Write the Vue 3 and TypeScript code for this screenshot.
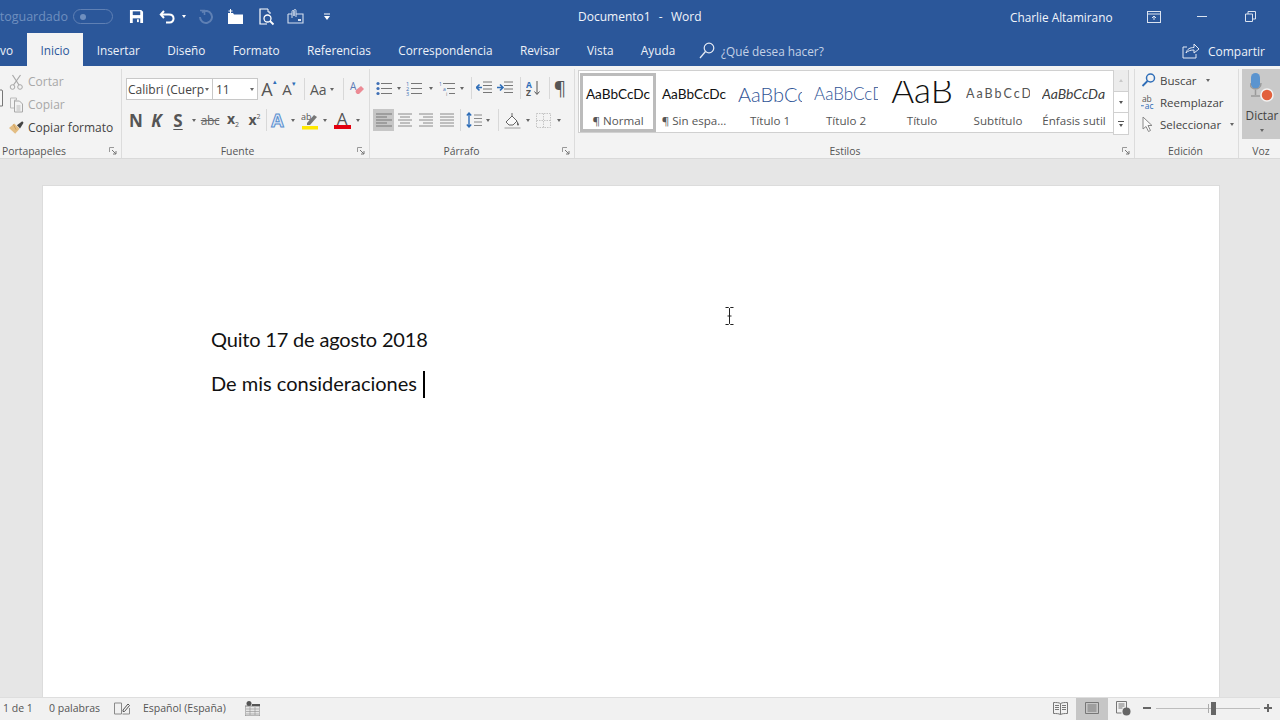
<script setup lang="ts">
const tabs: string[] = ['Insertar', 'Diseño', 'Formato', 'Referencias', 'Correspondencia', 'Revisar', 'Vista', 'Ayuda']
const styles = [
  { cls: 'normal sel', preview: 'AaBbCcDc', label: '¶ Normal' },
  { cls: 'normal', preview: 'AaBbCcDc', label: '¶ Sin espa...' },
  { cls: 'h1', preview: 'AaBbCc', label: 'Título 1' },
  { cls: 'h2', preview: 'AaBbCcD', label: 'Título 2' },
  { cls: 'title', preview: 'AaB', label: 'Título' },
  { cls: 'sub', preview: 'AaBbCcD', label: 'Subtítulo' },
  { cls: 'emph', preview: 'AaBbCcDa', label: 'Énfasis sutil' },
]
</script>

<template>
  <div class="word">
    <header class="top">
      <div class="titlebar">
        <div class="autosave"><span>Autoguardado</span></div>
        <div class="toggle"><i></i></div>
        <div class="qat">
          <svg width="15" height="15" viewBox="0 0 16 16"><path d="M1 1h12l2 2v12H1z" fill="#fff"/><path d="M4 2.500h8v4H4z" fill="#2b579a"/><path d="M4 10h8v5H4z" fill="#2b579a"/><path d="M8.500 11h2v3h-2z" fill="#fff"/></svg>
          <svg class="undo" width="17" height="16" viewBox="0 0 17 16"><path d="M5 2 1.800 5.500 5 9" fill="none" stroke="#fff" stroke-width="2"/><path d="M2 5.500h8c6 0 6 8 .5 8H7" fill="none" stroke="#fff" stroke-width="2"/></svg>
          <i class="dd white undo-dd"></i>
          <svg class="redo" width="16" height="16" viewBox="0 0 16 16"><path d="M4 3.500A6 6 0 1 1 2 8" fill="none" stroke="#5f80b4" stroke-width="2"/><path d="M2 1.500h4.500V6" fill="none" stroke="#5f80b4" stroke-width="1.600"/></svg>
          <svg class="folder" width="17" height="16" viewBox="0 0 17 16"><path d="M1 4h5l1 1.500h9V15H1z" fill="#fff"/><path d="M3.500 0v4M1.500 2h4" stroke="#fff" stroke-width="1"/></svg>
          <svg class="preview" width="17" height="18" viewBox="0 0 17 18"><path d="M10 1H2v15h7" fill="none" stroke="#fff" stroke-width="1.200"/><path d="M10 1v3h2v2" fill="none" stroke="#fff"/><circle cx="9.500" cy="10.500" r="3.500" fill="none" stroke="#fff" stroke-width="1.300"/><path d="m12 13 3.500 3.500" stroke="#fff" stroke-width="1.800"/></svg>
          <svg class="touch" width="17" height="16" viewBox="0 0 17 16"><path d="M1 5h4M9 5h7v9H1V5" fill="none" stroke="#d6e0ef" stroke-width="1.100"/><path d="M5 9V2.500a1 1 0 0 1 2 0V7M7 7V1.500a1 1 0 0 1 2 0V8" fill="none" stroke="#d6e0ef"/><path d="M11 10h3v2h-3z" fill="#d6e0ef"/></svg>
          <svg class="more" width="8" height="8" viewBox="0 0 8 8"><path d="M1 1h6" stroke="#fff"/><path d="M1 3h6L4 7z" fill="#fff"/></svg>
        </div>
        <div class="doc-title">Documento1&nbsp; -&nbsp; Word</div>
        <div class="user">Charlie Altamirano</div>
        <svg class="win-ribbon" width="14" height="12" viewBox="0 0 14 12"><rect x=".5" y=".5" width="13" height="11" fill="none" stroke="#dbe3f0"/><path d="M.5 3h13" stroke="#dbe3f0"/><path d="M7 9V5M5 7l2-2 2 2" fill="none" stroke="#dbe3f0"/></svg>
        <span class="win-min"></span>
        <svg class="win-restore" width="11" height="11" viewBox="0 0 11 11"><path d="M.5 3h7v7.500h-7zM3 3V.5h7.500V8H8" fill="none" stroke="#dbe3f0"/></svg>
      </div>
      <div class="tabbar">
        <span class="tab-file">vo</span>
        <span class="tab-active">Inicio</span>
        <span v-for="t in tabs" :key="t" class="tab">{{ t }}</span>
        <svg class="search" width="16" height="17" viewBox="0 0 16 17"><circle cx="10" cy="6" r="4.800" fill="none" stroke="#e4eaf4" stroke-width="1.200"/><path d="M6.500 9.500 1 16" stroke="#e4eaf4" stroke-width="1.300"/></svg>
        <span class="tell">¿Qué desea hacer?</span>
        <svg class="share" width="18" height="17" viewBox="0 0 18 17"><path d="M5 5H1v11h13v-4" fill="none" stroke="#e4eaf4"/><path d="M4 11c1-4 4-5.500 8-5.500V2l5 5-5 4V8c-3 0-6 .5-8 3z" fill="none" stroke="#e4eaf4"/></svg>
        <span class="share-text">Compartir</span>
      </div>
    </header>

    <section class="ribbon">
      <div class="group g-clip">
        <div class="clip-body">
          <svg class="paste" width="3" height="18" viewBox="0 0 3 18"><path d="M0 1h2l.5 1v15H0" fill="#f7f7f7" stroke="#777"/></svg>
          <div class="clip-rows">
            <div class="clip-row off">
              <svg width="14" height="16" viewBox="0 0 14 16"><circle cx="3" cy="13" r="2.300" fill="none" stroke="#a8a8a8"/><circle cx="10.500" cy="13" r="2.300" fill="none" stroke="#a8a8a8"/><path d="M4 11 11 1M9.500 11 3 1" stroke="#a8a8a8" stroke-width="1.200"/></svg>
              <span>Cortar</span>
            </div>
            <div class="clip-row off">
              <svg width="14" height="16" viewBox="0 0 14 16"><path d="M1 1h6v2H5v8H1z" fill="none" stroke="#bbb"/><path d="M5 4h5l3 3v8H5z" fill="none" stroke="#a8a8a8"/><path d="M7 9h4M7 11h4M7 13h4" stroke="#bbb"/></svg>
              <span>Copiar</span>
            </div>
            <div class="clip-row">
              <svg class="brush" width="17" height="15" viewBox="0 0 17 15"><path d="M0 8 6 3l6 6-5 5.500z" fill="#e3bd83"/><path d="M5 4l3 6" stroke="#c99a57"/><path d="m9 5 6-4.500 1.500 1.500-4 6.500z" fill="#444"/></svg>
              <span>Copiar formato</span>
            </div>
          </div>
        </div>
        <div class="glabel clip-label"><span>Portapapeles</span><svg class="launch" width="8" height="8" viewBox="0 0 8 8"><path d="M.5 5V.5H5" fill="none" stroke="#999"/><path d="M3 3l4 4M7 4v3H4" fill="none" stroke="#777"/></svg></div>
      </div>

      <div class="group g-font">
        <div class="font-row1">
          <div class="combo font-name"><span>Calibri (Cuerp</span><i class="dd"></i></div>
          <div class="combo font-size"><span>11</span><i class="dd"></i></div>
          <span class="grow big">A<sup>▴</sup></span>
          <span class="grow small">A<sup>▾</sup></span>
          <i class="vsep"></i>
          <span class="aa">Aa<i class="dd"></i></span>
          <i class="vsep"></i>
          <svg width="16" height="16" viewBox="0 0 16 16"><text x="1" y="9" font-size="10" fill="#5b7bb5" font-family="Open Sans">A</text><path d="m7 9 5-4 3 3-5 5H8L6.500 11z" fill="#ec8a94"/></svg>
        </div>
        <div class="font-row2">
          <b class="fmt">N</b>
          <b class="fmt it">K</b>
          <b class="fmt un">S</b>
          <i class="dd"></i>
          <span class="strike">abc</span>
          <span class="sc">x<sub>2</sub></span>
          <span class="sc">x<sup>2</sup></span>
          <i class="vsep"></i>
          <span class="fx">A</span>
          <i class="dd"></i>
          <svg width="18" height="19" viewBox="0 0 18 19"><text x="0" y="9" font-size="9" fill="#555" font-family="Open Sans">ab</text><path d="m6 12 7-8 3 2-7 8H6z" fill="#777"/><rect x="1" y="15" width="16" height="3.500" fill="#ffe800"/></svg>
          <i class="dd"></i>
          <span class="fcolor">A</span>
          <i class="dd"></i>
        </div>
        <div class="glabel"><span>Fuente</span><svg class="launch" width="8" height="8" viewBox="0 0 8 8"><path d="M.5 5V.5H5" fill="none" stroke="#999"/><path d="M3 3l4 4M7 4v3H4" fill="none" stroke="#777"/></svg></div>
      </div>

      <div class="group g-para">
        <div class="para-row1">
          <svg width="16" height="15" viewBox="0 0 16 15"><g fill="#3f6fb5"><circle cx="2" cy="2.500" r="1.600"/><circle cx="2" cy="7.500" r="1.600"/><circle cx="2" cy="12.500" r="1.600"/></g><path d="M5 2.500h11M5 7.500h11M5 12.500h11" stroke="#777"/></svg>
          <i class="dd"></i>
          <svg width="16" height="15" viewBox="0 0 16 15"><g fill="#3f6fb5" font-size="5.500" font-family="Open Sans"><text x="0" y="5">1</text><text x="0" y="10">2</text><text x="0" y="15">3</text></g><path d="M5 2.500h11M5 7.500h11M5 12.500h11" stroke="#777"/></svg>
          <i class="dd"></i>
          <svg width="16" height="15" viewBox="0 0 16 15"><g fill="#3f6fb5" font-size="5" font-family="Open Sans"><text x="0" y="5">1</text><text x="4" y="10">a</text></g><text x="7" y="15" font-size="5" fill="#777">i</text><path d="M4 2.500h12M8 7.500h8M10 12.500h6" stroke="#777"/></svg>
          <i class="dd"></i>
          <i class="vsep"></i>
          <svg width="16" height="14" viewBox="0 0 16 14"><path d="M7 1h9M7 4.500h9M7 8h9M7 11.500h9" stroke="#777"/><path d="M6 6.500H1M3.500 3.500l-3 3 3 3" fill="none" stroke="#2f6eb8" stroke-width="1.600"/></svg>
          <svg width="16" height="14" viewBox="0 0 16 14"><path d="M7 1h9M7 4.500h9M7 8h9M7 11.500h9" stroke="#777"/><path d="M0 6.500h5M3 3.500l3 3-3 3" fill="none" stroke="#2f6eb8" stroke-width="1.600"/></svg>
          <i class="vsep"></i>
          <svg width="15" height="16" viewBox="0 0 15 16"><text x="0" y="7.500" font-size="8.500" font-weight="700" fill="#2f6eb8" font-family="Open Sans">A</text><text x="0" y="15.500" font-size="8.500" font-weight="700" fill="#555" font-family="Open Sans">Z</text><path d="M11 1v13M8.500 11.500l2.500 3 2.500-3" fill="none" stroke="#555"/></svg>
          <i class="vsep"></i>
          <span class="pilcrow">¶</span>
        </div>
        <div class="para-row2">
          <span class="al on"><svg width="16" height="14" viewBox="0 0 16 14"><path d="M0 1h16M0 4h11M0 7h16M0 10h11M0 13h16" stroke="#777"/></svg></span>
          <span class="al"><svg width="14" height="14" viewBox="0 0 14 14"><path d="M0 1h14M2 4h10M0 7h14M2 10h10M0 13h14" stroke="#8a8a8a"/></svg></span>
          <span class="al"><svg width="14" height="14" viewBox="0 0 14 14"><path d="M0 1h14M4 4h10M0 7h14M4 10h10M0 13h14" stroke="#8a8a8a"/></svg></span>
          <span class="al"><svg width="14" height="14" viewBox="0 0 14 14"><path d="M0 1h14M0 4h14M0 7h14M0 10h14M0 13h14" stroke="#8a8a8a"/></svg></span>
          <i class="vsep"></i>
          <svg width="16" height="16" viewBox="0 0 16 16"><path d="M3 1v14M.8 3.500 3 1l2.200 2.500M.8 12.500 3 15l2.200-2.500" fill="none" stroke="#2f6eb8" stroke-width="1.400"/><path d="M8 3h8M8 6.500h8M8 10h8M8 13.500h8" stroke="#8a8a8a"/></svg>
          <i class="dd"></i>
          <i class="vsep"></i>
          <svg width="17" height="17" viewBox="0 0 17 17"><path d="m2 10 6-6 5 5-4 4H5z" fill="#fafafa" stroke="#666"/><path d="M8 4V1" stroke="#666"/><path d="M13 9c1 1.500 2 3 2 3.500a1 1 0 0 1-2 0z" fill="#666"/><path d="M.5 16h16" stroke="#bbb" stroke-width="1.500"/></svg>
          <i class="dd"></i>
          <svg width="15" height="15" viewBox="0 0 15 15"><path d="M.5.500h14v14H.5zM7.500.500v14M.5 7.500h14" fill="none" stroke="#c4c4c4" stroke-dasharray="1.500 1"/></svg>
          <i class="dd"></i>
        </div>
        <div class="glabel"><span>Párrafo</span><svg class="launch" width="8" height="8" viewBox="0 0 8 8"><path d="M.5 5V.5H5" fill="none" stroke="#999"/><path d="M3 3l4 4M7 4v3H4" fill="none" stroke="#777"/></svg></div>
      </div>

      <div class="group g-styles">
        <div class="gallery">
          <div v-for="s in styles" :key="s.label" class="style" :class="s.cls">
            <div class="prev">{{ s.preview }}</div>
            <div class="slabel">{{ s.label }}</div>
          </div>
          <div class="scroller">
            <span class="up"><i class="dd up-dd"></i></span>
            <span><i class="dd dark"></i></span>
            <span class="moreb"><b></b><i class="dd dark"></i></span>
          </div>
        </div>
        <div class="glabel"><span>Estilos</span><svg class="launch" width="8" height="8" viewBox="0 0 8 8"><path d="M.5 5V.5H5" fill="none" stroke="#999"/><path d="M3 3l4 4M7 4v3H4" fill="none" stroke="#777"/></svg></div>
      </div>

      <div class="group g-edit">
        <div class="edit-rows">
          <div class="edit-row">
            <svg width="15" height="14" viewBox="0 0 15 14"><circle cx="9.500" cy="5" r="4" fill="none" stroke="#2f6eb8" stroke-width="1.500"/><path d="M6.500 8 1.500 13" stroke="#2f6eb8" stroke-width="1.800"/></svg>
            <span>Buscar</span><i class="dd"></i>
          </div>
          <div class="edit-row">
            <svg width="15" height="16" viewBox="0 0 16 16"><text x="1" y="7.500" font-size="9" fill="#555" font-family="Open Sans">ab</text><text x="4" y="15.500" font-size="9" fill="#2f6eb8" font-family="Open Sans">ac</text><path d="M0 12h3" stroke="#2f6eb8"/></svg>
            <span>Reemplazar</span>
          </div>
          <div class="edit-row">
            <svg width="15" height="16" viewBox="0 0 15 16"><path d="M2 1v12l3-2.500 2.500 5 2-1-2.500-5h4z" fill="#fafafa" stroke="#888"/></svg>
            <span>Seleccionar</span><i class="dd"></i>
          </div>
        </div>
        <div class="glabel"><span>Edición</span></div>
      </div>

      <div class="group g-voice">
        <div class="dictate">
          <svg width="24" height="30" viewBox="0 0 24 30"><rect x="1" y="0" width="9" height="16" rx="4.500" fill="#5b94cf"/><path d="M0 10c0 8 11 8 11 0M5.500 17v5M1 23h9" fill="none" stroke="#9a9a9a" stroke-width="1.500"/><circle cx="17" cy="22" r="6" fill="#e2603c" stroke="#f2f2f2" stroke-width="1.500"/></svg>
          <span>Dictar</span>
          <i class="dd"></i>
        </div>
        <div class="glabel"><span>Voz</span></div>
      </div>
    </section>

    <main class="canvas">
      <article class="page">
        <p class="line first">Quito 17 de agosto 2018</p>
        <p class="line">De mis consideraciones <i class="caret"></i></p>
        <svg class="ibeam" width="9" height="18" viewBox="0 0 9 18"><path d="M.5.500h3l1 1 1-1h3M4.500 1.500v15M.5 17.500h3l1-1 1 1h3M2.500 9h4" fill="none" stroke="#222"/></svg>
      </article>
    </main>

    <footer class="status">
      <span class="st-page">1 de 1</span>
      <span class="st-words">0 palabras</span>
      <svg class="st-book" width="16" height="13" viewBox="0 0 16 13"><path d="M7.500 1H.5v11h7zM8.500 12h7V6" fill="none" stroke="#8a8a8a"/><path d="m9 8 5-6 1.500 1.500-5 6H9z" fill="none" stroke="#555"/></svg>
      <span class="st-lang">Español (España)</span>
      <svg class="st-cal" width="15" height="15" viewBox="0 0 15 15"><rect y="5" width="15" height="10" fill="#e6e6e6" stroke="#888"/><path d="M1 8h13M1 10.500h13M1 13h13M5 6v8M10 6v8" stroke="#999" stroke-width=".7"/><circle cx="4" cy="2.500" r="2.500" fill="#555"/><path d="M7 4h8" stroke="#555" stroke-width="2"/></svg>
      <div class="views">
        <svg width="15" height="13" viewBox="0 0 15 13"><path d="M7.500 1.500C6 .5 3 .5.500.500v11c3 0 5 0 7 1 2-1 4-1 7-1V.500c-3 0-5 0-7 1zM7.500 1.500v11M2 3.500h4M2 5.500h4M2 7.500h4M9 3.500h4M9 5.500h4M9 7.500h4" fill="none" stroke="#777"/></svg>
        <span class="view-on"><svg width="14" height="12" viewBox="0 0 14 12"><path d="M.5.500h13v11H.5zM2.500 3h9M2.500 5h9M2.500 7h9M2.500 9h9" fill="none" stroke="#777"/></svg></span>
        <svg class="v-web" width="15" height="15" viewBox="0 0 15 15"><path d="M.5.500h10V8M.5.500V12h5M2.500 3h6M2.500 5h6M2.500 7h4" fill="none" stroke="#777"/><circle cx="10.500" cy="10.500" r="4" fill="#666"/></svg>
      </div>
      <div class="zoom">
        <i class="z-minus"></i>
        <div class="z-track"><i class="z-tick"></i><i class="z-thumb"></i></div>
        <i class="z-plus"></i>
      </div>
    </footer>
  </div>
</template>

<style>
html, body { margin: 0; padding: 0; }
</style>

<style scoped>
.word { width: 1280px; height: 720px; display: flex; flex-direction: column; overflow: hidden; font-family: "Open Sans", "Noto Sans", sans-serif; font-size: 12px; color: #444; background: #e6e6e6; }
svg { display: block; flex: none; }
.dd { display: block; width: 0; height: 0; border-left: 2.5px solid transparent; border-right: 2.5px solid transparent; border-top: 3px solid #666; flex: none; }
.dd.white { border-top-color: #fff; }
.dd.dark { border-top-color: #555; }
.vsep { display: block; width: 1px; height: 22px; background: #d8d8d8; }

/* top */
.top { height: 66px; background: #2b579a; color: #fff; flex: none; }
.titlebar { height: 33px; display: flex; align-items: center; }
.autosave { width: 68px; overflow: hidden; display: flex; justify-content: flex-end; color: #6f8fbf; white-space: nowrap; font-size: 12.500px; }
.toggle { width: 40px; height: 15px; margin-left: 5px; border: 1px solid #5f80b4; border-radius: 9px; display: flex; align-items: center; padding-left: 6px; box-sizing: border-box; }
.toggle i { width: 6px; height: 6px; border-radius: 50%; background: #6f8fbf; }
.qat { display: flex; align-items: center; margin-left: 16px; width: 200px; }
.qat .undo { margin-left: 15px; }
.undo-dd { margin-left: 6px; }
.qat .redo { margin-left: 12px; }
.qat .folder { margin-left: 13px; }
.qat .preview { margin-left: 14px; }
.qat .touch { margin-left: 12px; }
.qat .more { margin-left: 19px; }
.doc-title { margin-left: 249px; width: 432px; font-size: 12px; word-spacing: 1px; color: #f2f5fa; white-space: nowrap; }
.user { width: 137px; font-size: 11.800px; color: #f2f5fa; white-space: nowrap; }
.win-min { width: 10px; height: 1px; background: #dbe3f0; margin-left: 36px; }
.win-restore { margin-left: 38px; }
.tabbar { height: 33px; display: flex; align-items: stretch; line-height: 34px; white-space: nowrap; color: #eef2f8; font-size: 11.800px; }
.tab-file { width: 27px; box-sizing: border-box; }
.tab-active { width: 56px; text-align: center; background: #f3f3f3; color: #2b579a; }
.tab { padding: 0 13.700px; }
.search { align-self: center; margin-left: 10px; margin-top: 1px; }
.tell { margin-left: 6px; color: #c5d2e6; line-height: 36px; width: 461px; }
.share { align-self: center; margin-top: 1px; }
.share-text { margin-left: 8px; line-height: 37px; font-size: 12px; }

/* ribbon */
.ribbon { height: 93px; flex: none; display: flex; background: #f3f3f3; border-bottom: 1px solid #d9d9d9; box-sizing: border-box; }
.group { position: relative; display: flex; flex-direction: column; box-sizing: border-box; border-right: 1px solid #dcdcdc; margin-top: 3px; }
.glabel { margin-top: auto; height: 14px; line-height: 14px; font-size: 10.400px; text-align: center; color: #555; }
.launch { position: absolute; right: 4px; bottom: 3px; }
.g-clip { width: 122px; }
.clip-body { display: flex; }
.paste { margin-top: 20px; }
.clip-rows { margin-left: 6px; margin-top: 1px; }
.clip-row { height: 23px; display: flex; align-items: center; gap: 4px; color: #444; white-space: nowrap; }
.clip-row svg { width: 15px; }
.clip-row.off { color: #a8a8a8; }
.clip-label { text-align: left; padding-left: 2px; }

.g-font { width: 248px; padding-left: 4px; }
.g-font .glabel { padding-right: 20px; }
.font-row1 { display: grid; grid-template-columns: 87px 45px 22px 18px 12px 28px 10px 18px; align-items: center; justify-items: center; height: 22px; margin-top: 9px; }
.combo { height: 22px; display: flex; align-items: center; justify-content: space-between; box-sizing: border-box; border: 1px solid #c8c8c8; background: #fff; padding: 0 3px 0 1px; width: 100%; }
.font-name span { width: 76px; overflow: hidden; white-space: nowrap; }
.font-size { border-left: 0; padding-left: 3px; }
.grow { display: flex; color: #555; line-height: 1; }
.grow sup { font-size: 7px; color: #2f6eb8; margin-top: -2px; }
.grow.big { font-size: 18px; }
.grow.small { font-size: 15px; }
.aa { display: flex; align-items: center; gap: 3px; font-size: 14px; color: #555; justify-self: start; }
.font-row2 { display: grid; grid-template-columns: 20px 21px 22px 9px 24px 22px 21px 3px 19px 12px 22px 8px 26px 6px; align-items: center; justify-items: center; height: 24px; margin-top: 8px; }
.fmt { font-size: 17px; color: #555; line-height: 1; font-family: "Open Sans", sans-serif; }
.fmt.it { font-style: italic; }
.fmt.un { text-decoration: underline; text-underline-offset: 2px; text-decoration-thickness: 1px; }
.strike { text-decoration: line-through; color: #666; font-size: 12px; letter-spacing: -.4px; }
.sc { font-weight: 700; font-size: 14px; color: #555; line-height: 1; display: flex; }
.sc sub { font-size: 7px; font-weight: 400; margin-top: 9px; line-height: 1; vertical-align: baseline; }
.sc sup { font-size: 7px; font-weight: 400; line-height: 1; vertical-align: baseline; }
.fx { font-size: 18px; font-weight: 700; color: #dce8f6; -webkit-text-stroke: 1px #5a8fcf; line-height: 1; }
.fcolor { font-size: 17px; line-height: 15px; height: 18px; border-bottom: 4px solid #e3000f; box-sizing: border-box; width: 17px; text-align: center; color: #555; }

.g-para { width: 205px; padding-left: 3px; }
.g-para .glabel { padding-right: 24px; }
.para-row1 { display: grid; grid-template-columns: 16px 14px 16px 18px 14px 16px 2px 24px 18px 12px 14px 18px 4px; justify-items: center; align-items: center; height: 24px; margin-top: 7px; margin-left: 3px; }
.pilcrow { font-size: 19px; line-height: 1; color: #555; }
.para-row2 { display: grid; grid-template-columns: 21px 21px 21px 21px 6px 21px 8px 12px 16px 16px 14px 18px; justify-items: center; align-items: center; height: 22px; margin-top: 9px; }
.al { width: 21px; height: 22px; display: flex; align-items: center; justify-content: center; }
.al.on { background: #c6c6c6; }

.g-styles { width: 560px; padding-left: 3px; }
.g-styles .glabel { padding-right: 22px; }
.gallery { display: flex; height: 63px; width: 551px; margin-top: 1px; background: #fff; box-sizing: border-box; border: 1px solid #d0d0d0; border-right: 0; padding: 2px 0 0 1px; }
.style { width: 76px; height: 59px; box-sizing: border-box; overflow: hidden; padding: 0 2px; border: 3px solid transparent; flex: none; }
.style.sel { border-color: #bcbcbc; padding: 0 1px; }
.prev { height: 37px; line-height: 36px; font-family: Lato, sans-serif; font-size: 13.600px; color: #111; white-space: nowrap; overflow: hidden; text-align: center; }
.slabel { font-size: 11.600px; color: #555; text-align: center; line-height: 15px; white-space: nowrap; }
.h1, .h2, .title, .sub, .emph { padding: 0 3px; }
.h1 .prev { font-size: 20px; font-weight: 300; color: #2f5496; text-align: left; }
.h2 .prev { font-size: 17px; font-weight: 300; color: #2f5496; text-align: left; }
.title .prev { font-size: 35px; font-weight: 300; color: #111; height: 32px; line-height: 17px; margin-top: 5px; }
.sub .prev { font-size: 12.500px; letter-spacing: 2px; color: #555; text-align: left; }
.emph .prev { font-style: italic; color: #404040; font-size: 14px; text-align: left; }
.scroller { margin-left: auto; width: 16px; height: 65px; margin-top: -3px; display: flex; flex-direction: column; border-left: 1px solid #d0d0d0; box-sizing: border-box; position: relative; }
.scroller span { flex: 1; display: flex; flex-direction: column; gap: 2px; align-items: center; justify-content: center; border-bottom: 1px solid #d0d0d0; border-right: 1px solid #d0d0d0; background: #fff; }
.scroller .up { background: #ececec; }
.up-dd { transform: rotate(180deg); border-top-color: #c8c8c8; }
.moreb b { display: block; width: 6px; height: 1px; background: #555; }

.g-edit { width: 104px; padding-left: 6px; }
.g-edit .glabel { padding-right: 8px; }
.edit-row { height: 22px; display: flex; align-items: center; gap: 4px; white-space: nowrap; color: #444; font-size: 11.500px; }
.edit-row .dd { margin-left: 5px; }
.g-voice { flex: 1; border-right: 0; padding-left: 3px; overflow: hidden; }
.dictate { height: 70px; width: 40px; background: #c9c9c9; display: flex; flex-direction: column; align-items: center; white-space: nowrap; flex: none; }
.dictate svg { margin-top: 4px; }
.dictate span { margin-top: 4px; line-height: 16px; font-size: 11.800px; }
.dictate .dd { margin-top: 6px; }

/* document */
.canvas { flex: 1; min-height: 0; padding: 26px 60px 0 42px; overflow: hidden; }
.page { position: relative; height: 100%; box-sizing: border-box; background: #fff; border: 1px solid #dcdcdc; border-bottom: 0; padding: 139px 0 0 168px; font-family: Lato, "Liberation Sans", sans-serif; font-size: 20px; color: #111; }
.line { margin: 0; height: 44px; line-height: 28px; white-space: pre; }
.first { letter-spacing: -.18px; }
.caret { display: inline-block; width: 2px; height: 27px; margin-left: 1px; background: #000; vertical-align: -7px; }
.ibeam { position: absolute; left: 682px; top: 121px; }

/* status */
.status { height: 23px; flex: none; display: flex; align-items: center; background: #f1f1f1; border-top: 1px solid #dedede; box-sizing: border-box; padding-bottom: 2px; font-size: 10.500px; color: #555; white-space: nowrap; }
.st-page { width: 49px; padding-left: 3px; box-sizing: border-box; }
.st-words { width: 65px; }
.st-book { margin-right: 13px; }
.st-lang { width: 102px; }
.views { margin-left: 793px; display: flex; align-items: center; }
.view-on { width: 32px; height: 23px; margin-left: 8px; margin-bottom: -2px; padding-bottom: 2px; box-sizing: border-box; background: #c6c6c6; display: flex; align-items: center; justify-content: center; }
.v-web { margin-left: 8px; }
.zoom { display: flex; align-items: center; margin-left: 12px; }
.z-minus { width: 8px; height: 2px; background: #666; }
.z-track { position: relative; width: 104px; height: 1px; margin: 0 4px 0 5px; background: #bdbdbd; }
.z-tick { position: absolute; left: 52px; top: -4px; width: 1px; height: 9px; background: #aaa; }
.z-thumb { position: absolute; left: 55px; top: -6px; width: 5px; height: 13px; background: #666; }
.z-plus { position: relative; width: 8px; height: 2px; background: #666; }
.z-plus::after { content: ""; position: absolute; left: 3px; top: -3px; width: 2px; height: 8px; background: #666; }
</style>
